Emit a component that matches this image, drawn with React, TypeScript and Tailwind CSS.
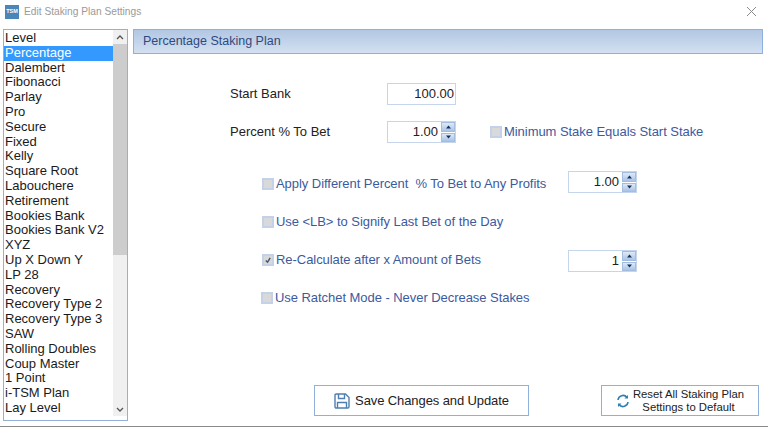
import React from "react";

const plans = ["Level","Percentage","Dalembert","Fibonacci","Parlay","Pro","Secure","Fixed","Kelly","Square Root","Labouchere","Retirement","Bookies Bank","Bookies Bank V2","XYZ","Up X Down Y","LP 28","Recovery","Recovery Type 2","Recovery Type 3","SAW","Rolling Doubles","Coup Master","1 Point","i-TSM Plan","Lay Level"];

function Spin() {
  return (
    <div className="flex flex-col w-[14px] h-[20px] gap-px shrink-0 bg-white">
      <div className="flex-1 flex items-center justify-center bg-gradient-to-b from-[#dfe9f6] to-[#a9c3e6] border border-[#a3bde0]">
        <svg width="7" height="4" viewBox="0 0 7 4"><path d="M3.5 0.5 L6 3.5 H1 Z" fill="#14305c" /></svg>
      </div>
      <div className="flex-1 flex items-center justify-center bg-gradient-to-b from-[#dfe9f6] to-[#a9c3e6] border border-[#a3bde0]">
        <svg width="7" height="4" viewBox="0 0 7 4"><path d="M3.5 3.5 L6 0.5 H1 Z" fill="#14305c" /></svg>
      </div>
    </div>
  );
}

function Field({ value, spin = true }: { value: string; spin?: boolean }) {
  return (
    <div className="w-[69px] h-[22px] flex items-center justify-end border border-[#c5d6ec] bg-white text-[13px] text-[#222] shrink-0">
      <span className={spin ? "pr-[3px]" : "pr-[1px]"}>{value}</span>
      {spin && <Spin />}
    </div>
  );
}

function Check({ label, checked = false }: { label: string; checked?: boolean }) {
  return (
    <div className="flex items-center gap-[2px] text-[13px] tracking-[-0.05px] text-[#3c5a9e] whitespace-pre">
      <div className="w-[12px] h-[12px] border-2 border-[#c3d2e8] bg-[#d9d9d9] flex items-center justify-center shrink-0">
        {checked && (
          <svg width="8" height="8" viewBox="0 0 9 9"><path d="M2 5 L4 7 L7 2" fill="none" stroke="#44556f" strokeWidth="1.6" /></svg>
        )}
      </div>
      <span>{label}</span>
    </div>
  );
}

export default function App() {
  return (
    <div className="w-[768px] h-[427px] bg-white overflow-hidden flex flex-col font-['Liberation_Sans',Arial,sans-serif] border-b border-b-[#8a8a8a]">
      <div className="h-[29px] shrink-0 flex items-center pl-[5px] pr-[11px] pb-[6px]">
        <div className="w-[14px] h-[14px] bg-[#4a86b8] flex items-center justify-center text-white text-[5.5px] font-bold leading-none">TSM</div>
        <span className="ml-[5px] text-[10.2px] text-[#9a9a9a]">Edit Staking Plan Settings</span>
        <svg className="ml-auto" width="11" height="11" viewBox="0 0 11 11"><path d="M1 1 L10 10 M10 1 L1 10" stroke="#8a8a8a" strokeWidth="1" fill="none" /></svg>
      </div>
      <div className="flex flex-1 min-h-0 pl-[3px] pr-[5px] pb-[5px] gap-[5px]">
        <div className="w-[125px] h-[392px] border border-[#93b0d8] flex bg-white shrink-0">
          <ul className="flex-1 min-w-0 text-[13px] leading-[14.8px] text-[#1a1a1a] pt-px">
            {plans.map((p) => (
              <li key={p} className={p === "Percentage" ? "bg-[#3399ff] text-white pl-[1px] whitespace-nowrap" : "pl-[1px] whitespace-nowrap"}>{p}</li>
            ))}
          </ul>
          <div className="w-[14px] shrink-0 mb-[4px] bg-[#f0f0f0] flex flex-col">
            <div className="h-[14px] flex items-center justify-center">
              <svg width="8" height="5" viewBox="0 0 8 5"><path d="M1 4 L4 1 L7 4" fill="none" stroke="#555" strokeWidth="1.3" /></svg>
            </div>
            <div className="h-[211px] bg-[#cdcdcd]" />
            <div className="flex-1" />
            <div className="h-[14px] flex items-center justify-center">
              <svg width="8" height="5" viewBox="0 0 8 5"><path d="M1 1 L4 4 L7 1" fill="none" stroke="#555" strokeWidth="1.3" /></svg>
            </div>
          </div>
        </div>
        <div className="flex-1 flex flex-col min-w-0">
          <div className="h-[25px] shrink-0 border border-[#8fb0dc] bg-gradient-to-b from-[#b2c7e3] to-[#d3e0f1] flex items-center pl-[9px] text-[12.5px] text-[#2f4a80]">Percentage Staking Plan</div>

          <div className="mt-[29px] ml-[97px] flex items-center h-[22px] text-[13px] text-[#222]">
            <span className="w-[157px] pb-[1px]">Start Bank</span>
            <Field value="100.00" spin={false} />
          </div>
          <div className="mt-[16px] ml-[97px] flex items-center h-[22px] text-[13px] text-[#222]">
            <span className="w-[157px] pb-[1px]">Percent % To Bet</span>
            <Field value="1.00" />
            <div className="ml-[34px]"><Check label="Minimum Stake Equals Start Stake" /></div>
          </div>
          <div className="mt-[28px] ml-[129px] flex items-center h-[22px]">
            <div className="w-[306px] pt-[3px]"><Check label="Apply Different Percent  % To Bet to Any Profits" /></div>
            <Field value="1.00" />
          </div>
          <div className="mt-[19px] ml-[129px] h-[20px] flex items-center"><Check label="Use <LB> to Signify Last Bet of the Day" /></div>
          <div className="mt-[18px] ml-[129px] flex items-center h-[22px]">
            <div className="w-[306px] pb-[3px]"><Check label="Re-Calculate after x Amount of Bets" checked /></div>
            <Field value="1" />
          </div>
          <div className="mt-[16px] ml-[128px] h-[20px] flex items-center"><Check label="Use Ratchet Mode - Never Decrease Stakes" /></div>

          <div className="mt-auto mb-[5px] flex items-center justify-between pl-[181px] pr-[4px]">
            <button className="w-[215px] h-[31px] border border-[#8fb0dc] bg-white flex items-center justify-center gap-[5px] text-[13px] tracking-[-0.1px] text-[#222]">
              <svg width="16" height="16" viewBox="0 0 16 16" fill="none" stroke="#4f7fb0" strokeWidth="1.4"><path d="M1 2.2 C1 1.5 1.5 1 2.2 1 H11.5 L15 4.5 V13.8 C15 14.5 14.5 15 13.8 15 H2.2 C1.5 15 1 14.5 1 13.8 Z" /><path d="M4.5 1 V5.5 H10.5 V1" /><path d="M3.5 15 V9.5 H12.5 V15" /></svg>
              <span>Save Changes and Update</span>
            </button>
            <button className="w-[158px] h-[31px] border border-[#8fb0dc] bg-white flex items-center justify-center gap-[3px] text-[11.3px] leading-[13px] text-[#222]">
              <svg width="14" height="14" viewBox="0 0 14 14" fill="none" stroke="#2f7fb5" strokeWidth="1.6"><path d="M2 6 A5 5 0 0 1 11 3.5" /><path d="M12 8 A5 5 0 0 1 3 10.5" /><path d="M12 1 V4.5 H8.5 Z" fill="#2f7fb5" stroke="none" /><path d="M2 13 V9.5 H5.5 Z" fill="#2f7fb5" stroke="none" /></svg>
              <span className="text-center">Reset All Staking Plan<br />Settings to Default</span>
            </button>
          </div>
        </div>
      </div>
    </div>
  );
}
